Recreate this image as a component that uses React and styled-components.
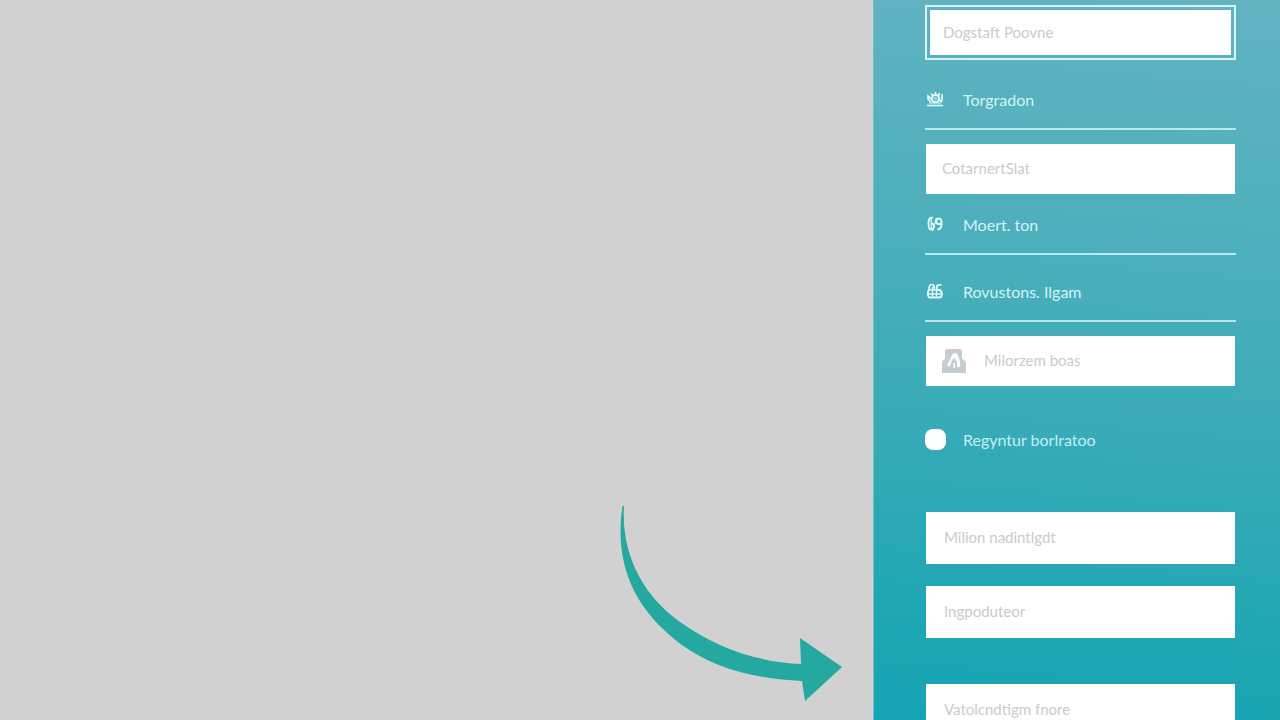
import React from "react";
import styled, { createGlobalStyle } from "styled-components";

const GlobalStyle = createGlobalStyle`
  *, *::before, *::after { box-sizing: border-box; }
  body {
    margin: 0;
    background: #d1d1d1;
    font-family: Lato, "Open Sans", sans-serif;
    font-size: 16px;
  }
`;

const Page = styled.div`
  display: grid;
  grid-template-columns: minmax(0, 1fr) 407px;
  height: 100vh;
  overflow: hidden;
`;

const Canvas = styled.main`
  display: flex;
  align-items: flex-end;
  justify-content: flex-end;
  padding: 18px 30px;
  background: #d1d1d1;
`;

const Panel = styled.form`
  display: flex;
  flex-direction: column;
  padding: 5px 44px 20px 51px;
  overflow-y: auto;
  scrollbar-width: none;
  border-left: 1px solid #70c3cb;
  background: linear-gradient(185deg, #63b3c1 0%, #4bafbb 36%, #38abb7 60%, #1fa6b3 86%, #16a4b4 100%);
`;

const Field = styled.label`
  flex: none;
  display: flex;
  align-items: center;
  gap: 18px;
  height: ${(p) => p.$height || 50}px;
  margin: ${(p) => p.$gap || 0}px 1px 0;
  padding: 0 ${(p) => p.$inset || 16}px;
  background: #fff;
`;

const FocusedField = styled(Field)`
  height: 55px;
  margin: 0;
  padding: 3px;
  border: 2px solid #d6f5fa;
  background: #fff content-box;
`;

const TextInput = styled.input`
  flex: 1;
  min-width: 0;
  height: 24px;
  padding: 0 ${(p) => p.$inset || 0}px 2px;
  border: 0;
  outline: 0;
  background: transparent;
  color: #8f9699;
  font: inherit;
  font-size: 15px;
  &::placeholder { color: #c8cbcd; opacity: 1; }
`;

const RowButton = styled.button`
  flex: none;
  display: flex;
  align-items: center;
  gap: 19px;
  height: 58px;
  margin-top: ${(p) => p.$gap}px;
  padding: 0 1px 2px;
  border: 0;
  border-bottom: 2px solid #b9e9ef;
  background: none;
  color: #d3f3f7;
  font: inherit;
  text-align: left;
`;

const CheckRow = styled.label`
  flex: none;
  display: flex;
  align-items: center;
  gap: 17px;
  height: 58px;
  margin: 25px 0 43px;
  padding-bottom: 1px;
  color: #c4eef3;
`;

const Check = styled.input`
  appearance: none;
  width: 21px;
  height: 21px;
  margin: 0;
  border-radius: 8px;
  background: #fff;
`;

const Glyph = styled.svg`
  flex: none;
  display: block;
`;

const CurvedArrow = () => (
  <Glyph width="224" height="196" viewBox="0 0 224 196" aria-hidden="true">
    <path
      fill="#25a89f"
      d="M3.500 0C-4 50 10 90 44 123C80 158 125 172 183 175L186 195L223 161L181 132L182 158C135 156 95 140 61 116C25 90 2 50 5 0Z"
    />
  </Glyph>
);

const GearIcon = () => (
  <Glyph width="18" height="16" viewBox="0 0 18 16" fill="none" stroke="#e2fafc" aria-hidden="true">
    <path d="M1 14.500h16" strokeWidth="1.600" />
    <path d="M3 12h12" strokeWidth="1" />
    <circle cx="9.500" cy="7.500" r="3.600" strokeWidth="2" />
    <circle cx="9.500" cy="7.500" r="1" strokeWidth="1" />
    <path d="M9.500 4V1M6.500 5 5.500 2.500M12.500 5l1-3M5.500 8 2 5v3l3 3M13.500 9l2.500 2M16 3v7" strokeWidth="1.700" />
  </Glyph>
);

const LinkIcon = () => (
  <Glyph width="18" height="16" viewBox="0 0 18 16" fill="none" stroke="#e2fafc" aria-hidden="true">
    <path d="M7 2C4 1 2.500 3 2.500 7s.5 6.500 2.500 6.500S8 12 8 10 6.500 7.500 5 8" strokeWidth="1.900" />
    <path d="M12.500 2.500c-2.500 0-3 5-.5 5.500s3.500-1 3.500-2.500-1-3-3-3M15.500 5c.5 5-.5 8.500-4 8.500" strokeWidth="1.900" />
    <path d="M10.500 2 6.500 15M5.200 3v10" strokeWidth="1.200" />
  </Glyph>
);

const PackageIcon = () => (
  <Glyph width="18" height="16" viewBox="0 0 18 16" fill="none" stroke="#e2fafc" aria-hidden="true">
    <path d="M3 6.500C1.500 8 1.500 14 3.500 14.500h10c3 0 3.500-7-.5-7.500" strokeWidth="1.900" />
    <path d="M3.500 6.500C2.500 3 4 1.500 6 1.500s2.500 2 2 5M11 6.500C9.500 3 11 1.500 15.500 2M11 2v5h4" strokeWidth="1.700" />
    <path d="M3 7h11M3 11h12M6.500 4v10M10.500 7v7" strokeWidth="1.300" />
  </Glyph>
);

const BadgeIcon = () => (
  <Glyph width="24" height="24" viewBox="0 0 24 24" aria-hidden="true">
    <path fill="#c5cdd0" d="M3 1.500Q3 0 5 0h13q2 0 2 2v8q4 1 4 5v9H0v-9q0-4 3-5Z" />
    <path fill="#fff" d="m5 17 5-11q1-2 3-2 2 0 3 2l2 7v5h-3v-5l-2-4-3 2-2 6Z" />
    <path fill="#fff" d="M11.500 14h1.500v5h-1.500Z" />
  </Glyph>
);

export default function App() {
  return (
    <>
      <GlobalStyle />
      <Page>
        <Canvas>
          <CurvedArrow />
        </Canvas>
        <Panel onSubmit={(e) => e.preventDefault()}>
          <FocusedField>
            <TextInput $inset={13} aria-label="Dogstaft Poovne" placeholder="Dogstaft Poovne" />
          </FocusedField>
          <RowButton type="button" $gap={12}>
            <GearIcon />
            Torgradon
          </RowButton>
          <Field $gap={14}>
            <TextInput aria-label="CotarnertSlat" placeholder="CotarnertSlat" />
          </Field>
          <RowButton type="button" $gap={3}>
            <LinkIcon />
            Moert. ton
          </RowButton>
          <RowButton type="button" $gap={9}>
            <PackageIcon />
            Rovustons. Ilgam
          </RowButton>
          <Field $gap={14}>
            <BadgeIcon />
            <TextInput aria-label="Milorzem boas" placeholder="Milorzem boas" />
          </Field>
          <CheckRow>
            <Check type="checkbox" />
            Regyntur borlratoo
          </CheckRow>
          <Field $height={52} $inset={18}>
            <TextInput aria-label="Milion nadintlgdt" placeholder="Milion nadintlgdt" />
          </Field>
          <Field $height={52} $gap={22} $inset={18}>
            <TextInput aria-label="Ingpoduteor" placeholder="Ingpoduteor" />
          </Field>
          <Field $height={52} $gap={46} $inset={18}>
            <TextInput aria-label="Vatolcndtigm fnore" placeholder="Vatolcndtigm fnore" />
          </Field>
        </Panel>
      </Page>
    </>
  );
}
